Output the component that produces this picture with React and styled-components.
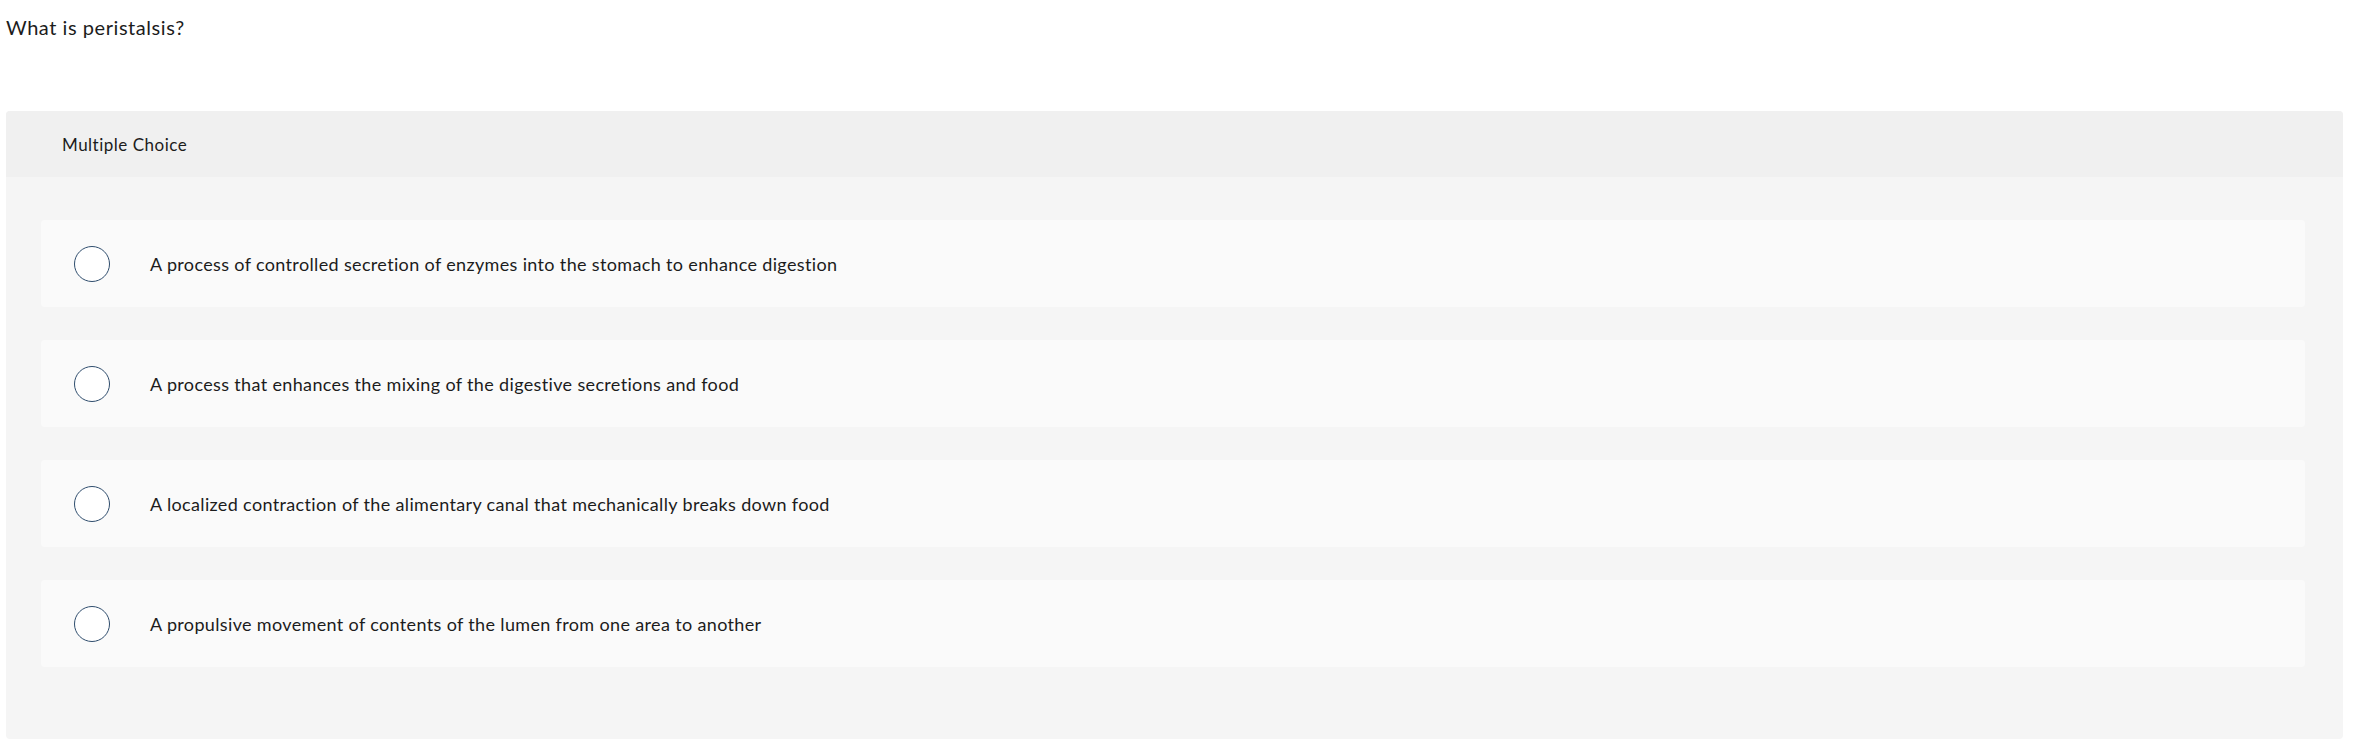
import styled, { createGlobalStyle } from 'styled-components';

const GlobalStyle = createGlobalStyle`
  body {
    margin: 0;
    background: #ffffff;
    font-family: Lato, "Liberation Sans", sans-serif;
    color: #1c1c1c;
  }
`;

const Page = styled.div`
  padding: 0 36px 0 6px;
`;

const Question = styled.div`
  padding-top: 13px;
  font-size: 20px;
  letter-spacing: 0.55px;
  line-height: 28px;
  margin-bottom: 70px;
`;

const Panel = styled.section`
  border-radius: 4px;
  overflow: hidden;
  background: #f5f5f5;
`;

const PanelHeader = styled.div`
  height: 66px;
  display: flex;
  align-items: center;
  padding-left: 56px;
  background: #f0f0f0;
  font-size: 17px;
  letter-spacing: 0.5px;
`;

const Choices = styled.div`
  display: flex;
  flex-direction: column;
  gap: 33px;
  padding: 43px 38px 72px 35px;
`;

const Choice = styled.label`
  height: 87px;
  display: flex;
  align-items: center;
  gap: 40px;
  padding-left: 33px;
  border-radius: 4px;
  background: #fafafa;
  font-size: 18px;
  letter-spacing: 0.35px;
  cursor: pointer;
`;

const Radio = styled.span`
  width: 34px;
  height: 34px;
  flex: none;
  border-radius: 50%;
  border: 1px solid #2f4d6d;
  background: #ffffff;
`;

const choices = [
  'A process of controlled secretion of enzymes into the stomach to enhance digestion',
  'A process that enhances the mixing of the digestive secretions and food',
  'A localized contraction of the alimentary canal that mechanically breaks down food',
  'A propulsive movement of contents of the lumen from one area to another',
];

const App = () => (
  <Page>
    <GlobalStyle />
    <Question>What is peristalsis?</Question>
    <Panel>
      <PanelHeader>Multiple Choice</PanelHeader>
      <Choices>
        {choices.map((text) => (
          <Choice key={text}>
            <Radio />
            <span>{text}</span>
          </Choice>
        ))}
      </Choices>
    </Panel>
  </Page>
);

export default App;
